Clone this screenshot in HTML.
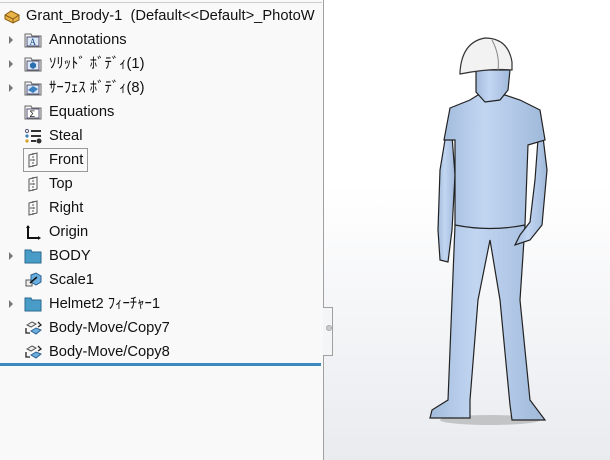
<!DOCTYPE html>
<html><head><style>
body{margin:0;width:610px;height:460px;overflow:hidden;font-family:"Liberation Sans","Noto Sans CJK JP",sans-serif;background:#fff;position:relative}
#panel{position:absolute;left:0;top:0;width:323px;height:460px;background:#f9f9f9;border-right:1px solid #a0a0a0}
#view{position:absolute;left:324px;top:0;width:286px;height:460px;background:linear-gradient(#fff,#fff 40%,#e9ebef)}
.row{position:absolute;left:0;height:24px;line-height:24px;font-size:14.7px;color:#111;white-space:nowrap}
.row span.t{position:absolute;left:49px}
.ar{position:absolute;left:9px;top:8px;width:0;height:0;border-left:4px solid #777;border-top:4px solid transparent;border-bottom:4px solid transparent}
.ic{position:absolute;left:24px;top:4px;width:18px;height:16px}
</style></head><body>
<div id="panel">
<div style="position:absolute;left:0;top:0;width:322px;height:2px;border-bottom:1px solid #ccc"></div>
<div class="row" style="top:4px"><svg class="ic" style="left:3px" viewBox="0 0 18 16"><path d="M2 7l6-4 8 4v5l-6 3-8-4z" fill="#e8b44a" stroke="#8a5a10"/><path d="M2 7l8 4 6-4M10 11v4" stroke="#8a5a10" fill="none"/></svg><span class="t" style="left:26px">Grant_Brody-1&nbsp; (Default&lt;&lt;Default&gt;_PhotoW</span></div>
<div class="row" style="top:28px"><i class="ar"></i><svg class="ic" viewBox="0 0 18 16"><path d="M1 2h6l1 2h9v11H1z" fill="#f4f4f4" stroke="#666"/><rect x="3" y="5" width="12" height="9" fill="#dce8f5" stroke="#557"/><text x="5.5" y="13" font-size="9" fill="#1a4d8f" font-family="Liberation Serif">A</text></svg><span class="t">Annotations</span></div>
<div class="row" style="top:52px"><i class="ar"></i><svg class="ic" viewBox="0 0 18 16"><path d="M1 2h6l1 2h9v11H1z" fill="#f4f4f4" stroke="#666"/><rect x="3" y="5" width="12" height="9" fill="#dce8f5" stroke="#557"/><path d="M6 8l3-2 3 2v3l-3 2-3-2z" fill="#2a6fb0"/></svg><span class="t">ｿﾘｯﾄﾞ ﾎﾞﾃﾞｨ(1)</span></div>
<div class="row" style="top:76px"><i class="ar"></i><svg class="ic" viewBox="0 0 18 16"><path d="M1 2h6l1 2h9v11H1z" fill="#f4f4f4" stroke="#666"/><rect x="3" y="5" width="12" height="9" fill="#dce8f5" stroke="#557"/><path d="M4 10l5-4 5 3-5 4z" fill="#3a80c0"/></svg><span class="t">ｻｰﾌｪｽ ﾎﾞﾃﾞｨ(8)</span></div>
<div class="row" style="top:100px"><svg class="ic" viewBox="0 0 18 16"><path d="M1 2h6l1 2h9v11H1z" fill="#f4f4f4" stroke="#666"/><rect x="3" y="5" width="12" height="9" fill="#fff" stroke="#557"/><text x="5.5" y="13" font-size="9" fill="#222">Σ</text></svg><span class="t">Equations</span></div>
<div class="row" style="top:124px"><svg class="ic" viewBox="0 0 18 16"><circle cx="3" cy="3" r="1.6" fill="none" stroke="#557"/><circle cx="3" cy="8" r="1.6" fill="#3a80c0"/><circle cx="3" cy="13" r="1.6" fill="#d4a020"/><path d="M7 3h10M7 8h10M7 13h5" stroke="#333" stroke-width="2"/><circle cx="15" cy="13" r="2.5" fill="#333"/></svg><span class="t">Steal</span></div>
<div class="row" style="top:148px"><div style="position:absolute;left:23px;top:0;width:63px;height:22px;border:1px solid #999"></div><svg class="ic" viewBox="0 0 18 16"><path d="M5 3l8-2v12l-8 2z" fill="none" stroke="#555"/><path d="M9 1v15M6 8h6" stroke="#555" stroke-dasharray="2 1"/></svg><span class="t">Front</span></div>
<div class="row" style="top:172px"><svg class="ic" viewBox="0 0 18 16"><path d="M5 3l8-2v12l-8 2z" fill="none" stroke="#555"/><path d="M9 1v15M6 8h6" stroke="#555" stroke-dasharray="2 1"/></svg><span class="t">Top</span></div>
<div class="row" style="top:196px"><svg class="ic" viewBox="0 0 18 16"><path d="M5 3l8-2v12l-8 2z" fill="none" stroke="#555"/><path d="M9 1v15M6 8h6" stroke="#555" stroke-dasharray="2 1"/></svg><span class="t">Right</span></div>
<div class="row" style="top:220px"><svg class="ic" viewBox="0 0 18 16"><path d="M4 2v12h11" fill="none" stroke="#111" stroke-width="2"/><path d="M2 4l2-3 2 3zM14 12l3 2-3 2z" fill="#111"/></svg><span class="t">Origin</span></div>
<div class="row" style="top:244px"><i class="ar"></i><svg class="ic" viewBox="0 0 18 16"><path d="M1 2h6l1 2h9v11H1z" fill="#4a9cc8" stroke="#2a6a90"/></svg><span class="t">BODY</span></div>
<div class="row" style="top:268px"><svg class="ic" viewBox="0 0 18 16"><rect x="2" y="8" width="6" height="6" fill="#eee" stroke="#555"/><path d="M7 3l5-2 5 3v6l-5 3-5-3z" fill="#6aaee0" stroke="#2a5f90"/><path d="M6 11l7-6" stroke="#111" stroke-width="1.5"/></svg><span class="t">Scale1</span></div>
<div class="row" style="top:292px"><i class="ar"></i><svg class="ic" viewBox="0 0 18 16"><path d="M1 2h6l1 2h9v11H1z" fill="#4a9cc8" stroke="#2a6a90"/></svg><span class="t">Helmet2 ﾌｨｰﾁｬｰ1</span></div>
<div class="row" style="top:316px"><svg class="ic" viewBox="0 0 18 16"><path d="M3 5l5-3 4 2-5 3z" fill="#eee" stroke="#555"/><path d="M7 11l5-3 5 2-5 4z" fill="#6aaee0" stroke="#2a5f90"/><path d="M2 8v5h4M14 2l3 3-3 2" fill="none" stroke="#222" stroke-width="1.3"/></svg><span class="t">Body-Move/Copy7</span></div>
<div class="row" style="top:340px"><svg class="ic" viewBox="0 0 18 16"><path d="M3 5l5-3 4 2-5 3z" fill="#eee" stroke="#555"/><path d="M7 11l5-3 5 2-5 4z" fill="#6aaee0" stroke="#2a5f90"/><path d="M2 8v5h4M14 2l3 3-3 2" fill="none" stroke="#222" stroke-width="1.3"/></svg><span class="t">Body-Move/Copy8</span></div>
<div style="position:absolute;left:0;top:363px;width:321px;height:3px;background:#3b8ac0"></div>
</div>
<div id="view">
<svg width="286" height="460" viewBox="324 0 286 460" style="position:absolute;left:0;top:0">
<defs><linearGradient id="g" x1="0" x2="1"><stop offset="0" stop-color="#a3bcdc"/><stop offset=".4" stop-color="#c2d6f2"/><stop offset="1" stop-color="#a0b9da"/></linearGradient></defs>
<ellipse cx="490" cy="420" rx="50" ry="5" fill="#999" opacity=".5"/>
<g fill="url(#g)" stroke="#222" stroke-width="1.2">
<path d="M455 225 L452 300 L448 400 L432 410 L430 418 L470 418 L470 400 L478 300 L490 240 L500 300 L510 405 L512 420 L545 420 L530 400 L520 300 L525 225 Z"/>
<path d="M450 110 L440 170 L438 230 L440 260 L448 262 L452 230 L455 175 Z"/>
<path d="M540 112 L547 170 L542 225 L530 240 L515 245 L520 235 L530 222 L535 180 Z"/>
<path d="M478 95 L470 100 L450 108 L444 140 L455 140 L455 225 Q490 232 525 225 L528 145 L545 140 L540 110 L520 100 L505 95 Z"/>
<path d="M476 70 L476 92 L485 102 L500 100 L508 90 L510 70 Z"/>
</g>
<path d="M460 72 Q462 42 485 38 Q508 38 512 62 L512 70 Q490 68 460 74 Z" fill="#f2f2f2" stroke="#333" stroke-width="1.2"/>
<path d="M492 40 Q500 55 498 70" fill="none" stroke="#888"/>
</svg>
</div>
<div style="position:absolute;left:323px;top:307px;width:9px;height:47px;background:#f4f5f7;border:1px solid #a0a0a0;border-left:none"></div>
<div style="position:absolute;left:326px;top:325px;width:4px;height:4px;border-radius:50%;background:#ccc;border:1px solid #aaa"></div>
</body></html>
